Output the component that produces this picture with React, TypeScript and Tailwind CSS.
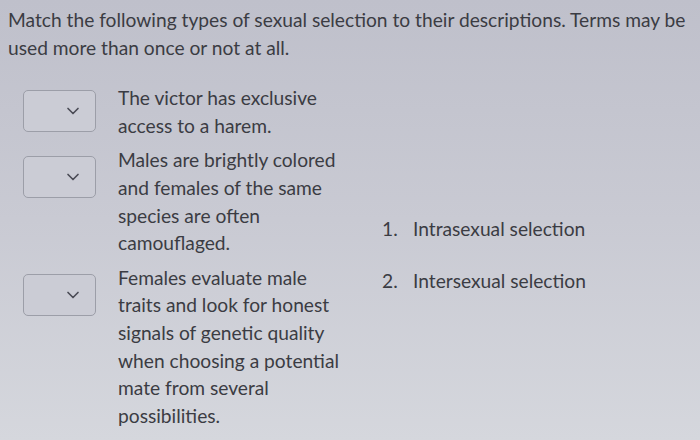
import { ChevronDown } from 'lucide-react'

const prompts = [
  ['The victor has exclusive', 'access to a harem.'],
  ['Males are brightly colored', 'and females of the same', 'species are often', 'camouflaged.'],
  [
    'Females evaluate male',
    'traits and look for honest',
    'signals of genetic quality',
    'when choosing a potential',
    'mate from several',
    'possibilities.',
  ],
]

const answers = ['Intrasexual selection', 'Intersexual selection']

function Dropdown() {
  return (
    <div className="w-[73px] h-[42px] shrink-0 rounded-[5px] border border-[#9c9ea8] bg-[#cbccd5] flex items-center justify-end pr-[12px]">
      <ChevronDown className="w-5 h-5 text-[#4a4b55]" strokeWidth={2} />
    </div>
  )
}

export default function App() {
  return (
    <div
      className="w-[700px] h-[440px] overflow-hidden bg-gradient-to-b from-[#bfc0cb] via-[#c9cad3] to-[#d5d7dd] text-[#3b3c43] text-[19.2px] leading-[27.6px]"
      style={{ fontFamily: 'Lato, "Open Sans", sans-serif' }}
    >
      <p className="px-[8px] pt-[6px]">
        Match the following types of sexual selection to their descriptions. Terms may be
        <br />
        used more than once or not at all.
      </p>

      <div className="flex mt-[23px]">
        <div className="flex flex-col gap-[7px] pl-[23px] w-[358px]">
          {prompts.map((lines, i) => (
            <div key={i} className="flex gap-[22px]">
              <div className={i === 0 ? 'pt-[6px]' : 'pt-[10px]'}>
                <Dropdown />
              </div>
              <div>
                {lines.map((l) => (
                  <div key={l}>{l}</div>
                ))}
              </div>
            </div>
          ))}
        </div>

        <div className="flex flex-col justify-center gap-[25px] pl-[24px] pb-[4px]">
          {answers.map((a, i) => (
            <div key={a} className="flex">
              <span className="w-[31px]">{i + 1}.</span>
              <span>{a}</span>
            </div>
          ))}
        </div>
      </div>
    </div>
  )
}
